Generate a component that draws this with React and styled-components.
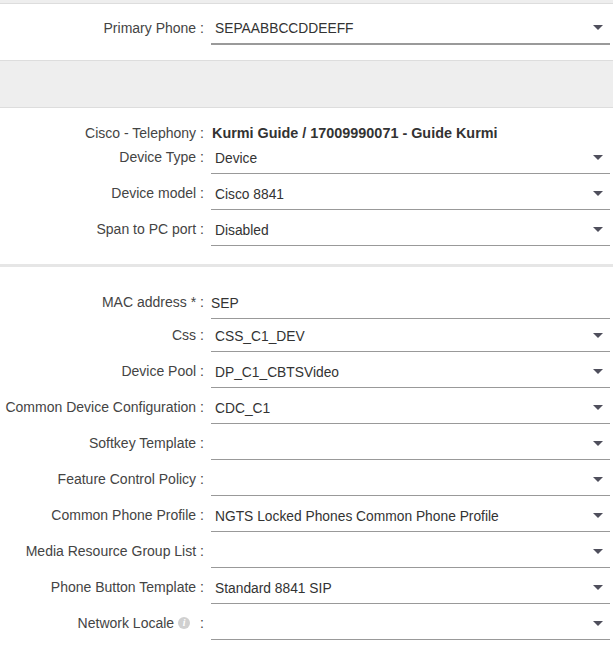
import React from 'react';
import styled, { createGlobalStyle } from 'styled-components';

const GlobalStyle = createGlobalStyle`
    body {
        margin: 0;
        background: #ffffff;
        font-family: "Liberation Sans", Arial, sans-serif;
        color: #333;
    }
`;

const Page = styled.div`
    width: 613px;
    background: #fff;
`;

const TopBand = styled.div`
    height: 3px;
    background: #eeeeee;
    border-bottom: 1px solid #dddddd;
`;

const GrayBand = styled.div`
    height: 46px;
    background: #eeeeee;
    border-bottom: 1px solid #dddddd;
`;

const Section = styled.div`
    display: flex;
    flex-direction: column;
    padding: ${props => props.pad || '0'};
    border-bottom: ${props => props.divider || 'none'};
`;

const Row = styled.div`
    display: grid;
    grid-template-columns: 211px 1fr;
    padding-right: 3px;
    margin-bottom: ${props => (props.gap !== undefined ? props.gap : 5)}px;
    &:last-child {
        margin-bottom: 0;
    }
`;

const Label = styled.div`
    display: flex;
    align-items: center;
    justify-content: flex-end;
    padding-right: 7px;
    height: ${props => props.h || 27}px;
    font-size: 14px;
    color: #444;
    white-space: nowrap;
`;

const Colon = styled.span`
    margin-left: ${props => props.wide ? 10 : 4}px;
`;

const Field = styled.div`
    display: flex;
    align-items: center;
    box-sizing: border-box;
    height: ${props => props.h || 31}px;
    padding-left: ${props => props.plain ? 0 : 4}px;
    border-bottom: ${props => props.thick ? '2px solid #9a9a9a' : '1px solid #999'};
    font-size: 13.8px;
    color: #333;
`;

const Value = styled.span`
    flex: 1;
    white-space: nowrap;
`;

const Static = styled.div`
    display: flex;
    align-items: center;
    height: 20px;
    padding-left: 1px;
    font-size: 14.4px;
    font-weight: bold;
    color: #333;
    white-space: nowrap;
`;

const Arrow = styled.span`
    width: 0;
    height: 0;
    margin-right: 7px;
    margin-bottom: 2px;
    border-left: 5px solid transparent;
    border-right: 5px solid transparent;
    border-top: 5px solid #4f4f5c;
`;

const InfoIcon = styled.span`
    display: inline-flex;
    align-items: center;
    justify-content: center;
    width: 12px;
    height: 12px;
    margin-left: 4px;
    border-radius: 50%;
    background: #d0d0d0;
    color: #fff;
    font-family: "Liberation Serif", serif;
    font-style: italic;
    font-weight: bold;
    font-size: 10px;
    line-height: 1;
`;

const Select = ({ label, value, thick, info }) => (
    <Row>
        <Label>
            {label}
            {info && <InfoIcon>i</InfoIcon>}
            <Colon wide={info}>:</Colon>
        </Label>
        <Field thick={thick}>
            <Value>{value}</Value>
            <Arrow />
        </Field>
    </Row>
);

const deviceFields = [
    { label: 'Css', value: 'CSS_C1_DEV' },
    { label: 'Device Pool', value: 'DP_C1_CBTSVideo' },
    { label: 'Common Device Configuration', value: 'CDC_C1' },
    { label: 'Softkey Template', value: '' },
    { label: 'Feature Control Policy', value: '' },
    { label: 'Common Phone Profile', value: 'NGTS Locked Phones Common Phone Profile' },
    { label: 'Media Resource Group List', value: '' },
    { label: 'Phone Button Template', value: 'Standard 8841 SIP' },
    { label: 'Network Locale', value: '', info: true }
];

export default function App() {
    return (
        <Page>
            <GlobalStyle />
            <TopBand />
            <Section pad="10px 0 15px" divider="1px solid #dddddd">
                <Select label="Primary Phone" value="SEPAABBCCDDEEFF" thick />
            </Section>
            <GrayBand />
            <Section pad="15px 0 18px" divider="3px solid #e6e6e6">
                <Row gap={0}>
                    <Label h={20}>
                        Cisco - Telephony<Colon>:</Colon>
                    </Label>
                    <Static>Kurmi Guide / 17009990071 - Guide Kurmi</Static>
                </Row>
                <Select label="Device Type" value="Device" />
                <Select label="Device model" value="Cisco 8841" />
                <Select label="Span to PC port" value="Disabled" />
            </Section>
            <Section pad="21px 0 10px">
                <Row gap={2}>
                    <Label>
                        MAC address *<Colon>:</Colon>
                    </Label>
                    <Field plain>
                        <Value>SEP</Value>
                    </Field>
                </Row>
                {deviceFields.map((f, i) => (
                    <Select key={'field' + i} label={f.label} value={f.value} info={f.info} />
                ))}
            </Section>
        </Page>
    );
}
